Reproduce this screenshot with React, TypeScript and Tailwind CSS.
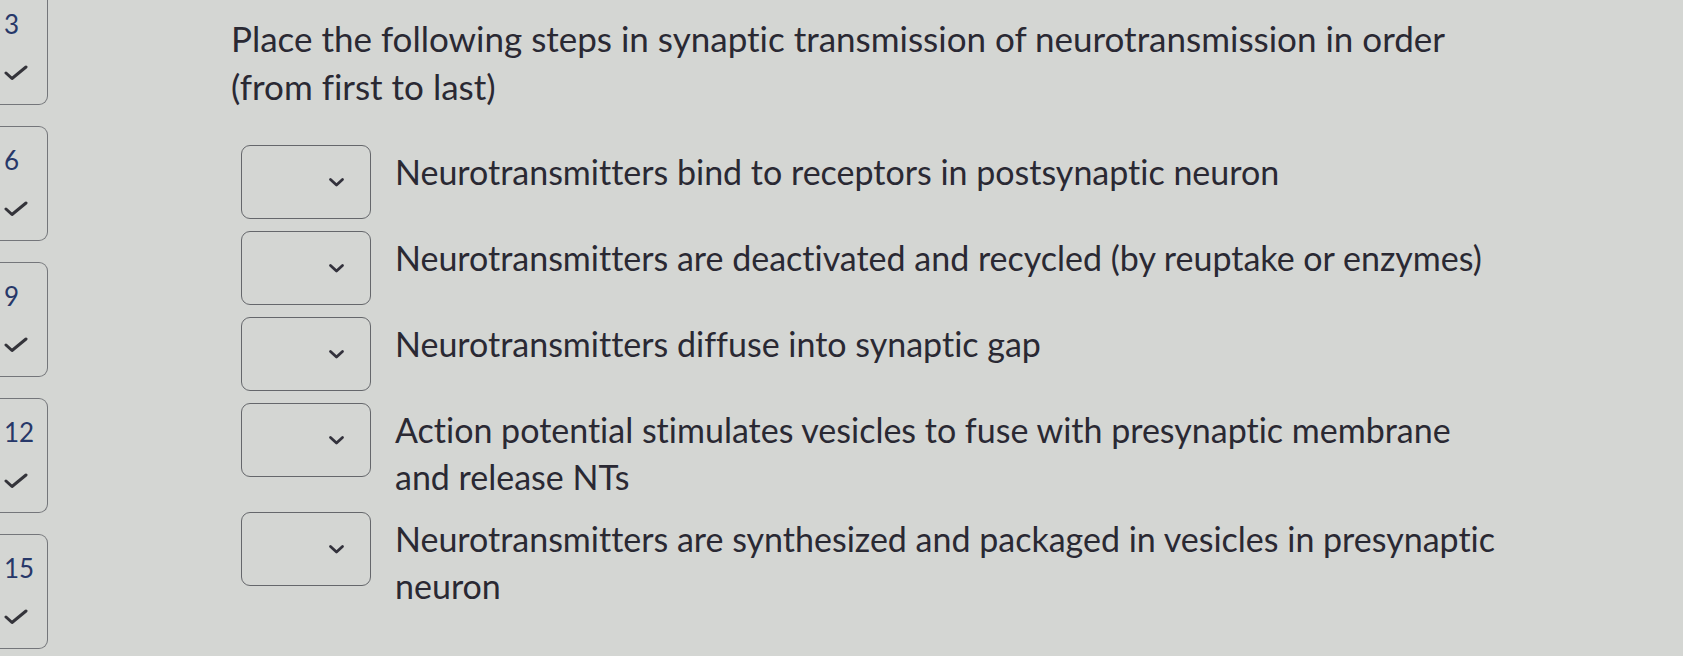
import React from "react";

// each step is split where its line wraps on the page
const STEPS: string[][] = [
  ["Neurotransmitters bind to receptors in postsynaptic neuron"],
  ["Neurotransmitters are deactivated and recycled (by reuptake or enzymes)"],
  ["Neurotransmitters diffuse into synaptic gap"],
  ["Action potential stimulates vesicles to fuse with presynaptic membrane", "and release NTs"],
  ["Neurotransmitters are synthesized and packaged in vesicles in presynaptic", "neuron"],
];

const DONE_QUESTIONS = [3, 6, 9, 12, 15];

function CheckMark() {
  return (
    <svg width="24" height="16" viewBox="0 0 24 16" fill="none">
      <path d="M2 8 L8 13.5 L22 2" stroke="#34343a" strokeWidth="3" strokeLinecap="round" strokeLinejoin="round" />
    </svg>
  );
}

function Chevron() {
  return (
    <svg width="17" height="11" viewBox="0 0 17 11" fill="none">
      <path d="M2.5 2.5 L8.5 8 L14.5 2.5" stroke="#33323c" strokeWidth="2.8" strokeLinecap="round" strokeLinejoin="round" />
    </svg>
  );
}

function OrderSelect() {
  return (
    <div className="w-[130px] h-[74px] shrink-0 rounded-[9px] border-[1.5px] border-[#65676b] flex items-center pl-[86px]">
      <Chevron />
    </div>
  );
}

export default function App() {
  return (
    <div
      className="w-[1683px] h-[656px] overflow-hidden bg-[#d4d6d3] flex text-[#2a2933] [font-variant-ligatures:none]"
      style={{ fontFamily: "Lato, 'Open Sans', sans-serif" }}
    >
      {/* question navigator, cut off at the left edge */}
      <div className="w-[60px] shrink-0 flex flex-col gap-[21px] mt-[-10px]">
        {DONE_QUESTIONS.map((n) => (
          <div
            key={n}
            className="w-[48px] h-[115px] shrink-0 border-[1.5px] border-l-0 border-[#74767a] rounded-r-[9px] flex flex-col pt-[20px] pl-[4px]"
          >
            <span className="text-[26px] leading-[26px] text-[#273869]">{n}</span>
            <div className="mt-[28px]">
              <CheckMark />
            </div>
          </div>
        ))}
      </div>

      {/* question body */}
      <div className="pl-[171px] pt-[14px] flex flex-col">
        <h1 className="text-[35px] leading-[48px] font-normal whitespace-nowrap">
          <span className="block">Place the following steps in synaptic transmission of neurotransmission in order</span>
          <span className="block">(from first to last)</span>
        </h1>

        <div className="mt-[35px] pl-[10px] flex flex-col gap-[12px]">
          {STEPS.map((lines) => (
            <div key={lines[0]} className="flex items-start gap-[24px]">
              <OrderSelect />
              <p className="text-[34px] leading-[47px] mt-[3px] whitespace-nowrap">
                {lines.map((line) => (
                  <span key={line} className="block">
                    {line}
                  </span>
                ))}
              </p>
            </div>
          ))}
        </div>
      </div>
    </div>
  );
}
